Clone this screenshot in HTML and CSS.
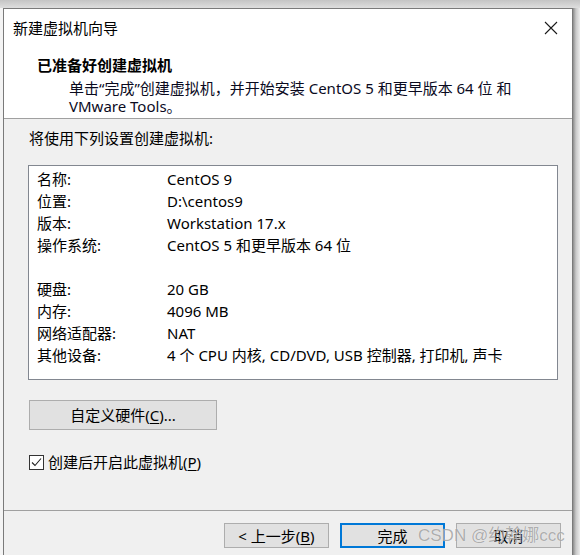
FILE: index.html
```html
<!DOCTYPE html>
<html lang="zh-CN">
<head>
    <meta charset="UTF-8">
    <meta name="viewport" content="width=device-width, initial-scale=1.0">
    <title>新建虚拟机向导</title>
    <link rel="stylesheet" href="styles.css">
</head>
<body>
    <div class="desktop">
        <div class="wizard">
            <div class="titlebar">
                <span class="title">新建虚拟机向导</span>
                <button class="close" aria-label="关闭">
                    <svg width="14" height="14" viewBox="0 0 14 14">
                        <path d="M1 1 L13 13 M13 1 L1 13" stroke="#1a1a1a" stroke-width="1.1" fill="none"/>
                    </svg>
                </button>
            </div>

            <div class="header">
                <h1>已准备好创建虚拟机</h1>
                <p class="desc">单击“完成”创建虚拟机，并开始安装 CentOS 5 和更早版本 64 位 和<br>VMware Tools。</p>
            </div>

            <div class="content">
                <p class="intro">将使用下列设置创建虚拟机:</p>
                <div class="summary">
                    <div class="row"><span class="key">名称:</span><span>CentOS 9</span></div>
                    <div class="row"><span class="key">位置:</span><span>D:\centos9</span></div>
                    <div class="row"><span class="key">版本:</span><span>Workstation 17.x</span></div>
                    <div class="row"><span class="key">操作系统:</span><span>CentOS 5 和更早版本 64 位</span></div>
                    <div class="row"></div>
                    <div class="row"><span class="key">硬盘:</span><span>20 GB</span></div>
                    <div class="row"><span class="key">内存:</span><span>4096 MB</span></div>
                    <div class="row"><span class="key">网络适配器:</span><span>NAT</span></div>
                    <div class="row"><span class="key">其他设备:</span><span>4 个 CPU 内核, CD/DVD, USB 控制器, 打印机, 声卡</span></div>
                </div>
                <button class="btn btn-hw">自定义硬件(<u>C</u>)...</button>
                <label class="check">
                    <span class="box">
                        <svg width="11" height="11" viewBox="0 0 11 11">
                            <path d="M1 5.5 L4 8.5 L10 1.5" stroke="#222" stroke-width="1.1" fill="none"/>
                        </svg>
                    </span>
                    <span>创建后开启此虚拟机(<u>P</u>)</span>
                </label>
            </div>

            <div class="footer">
                <button class="btn">&lt; 上一步(<u>B</u>)</button>
                <button class="btn btn-default">完成</button>
                <button class="btn">取消</button>
            </div>
        </div>
        <div class="watermark">CSDN @约翰娜ccc</div>
    </div>
</body>
</html>
```

FILE: styles.css
```css
* {
    margin: 0;
    padding: 0;
    box-sizing: border-box;
}

body {
    width: 580px;
    height: 555px;
    overflow: hidden;
    background: linear-gradient(to right, #f4f4f4 0, #f4f4f4 572px, #8c8c8c 573px, #c9c9c9 576px, #ececec 580px);
    font-family: "Noto Sans", "Noto Sans CJK SC", sans-serif;
    font-size: 15px;
    color: #000;
}

.desktop {
    position: relative;
    height: 555px;
    overflow: hidden;
    padding: 8px 0 0 3px;
    background: linear-gradient(to bottom, #c4c4c4 0, #dedede 8px, transparent 8px);
}

.wizard {
    width: 570px;
    height: 547px;
    border: 1px solid #7a7a7a;
    border-bottom: none;
    background: #f0f0f0;
}

.titlebar {
    height: 38px;
    background: #fff;
    display: flex;
    align-items: center;
    justify-content: space-between;
    padding: 0 14px 0 9px;
    line-height: 20px;
}

.close {
    border: none;
    background: none;
    width: 14px;
    height: 14px;
    display: flex;
}

.header {
    background: #fff;
    padding: 8px 0 3px 33px;
    border-bottom: 1px solid #a0a0a0;
}

.header h1 {
    font-size: 15px;
    font-weight: bold;
    line-height: 20px;
    font-family: "Noto Sans CJK SC", sans-serif;
}

.desc {
    margin: 4px 0 0 32px;
    line-height: 18px;
    white-space: nowrap;
    color: #0a0a1e;
}

.content {
    height: 391px;
    padding: 9px 24px 0 24px;
}

.intro {
    line-height: 20px;
    padding-left: 1px;
}

.summary {
    margin-top: 17px;
    width: 530px;
    height: 215px;
    background: #fff;
    border: 1px solid #828790;
    padding: 2px 0 0 8px;
}

.row {
    display: flex;
    height: 22px;
    line-height: 22px;
    white-space: nowrap;
}

.key {
    width: 130px;
}

.btn {
    font-family: "Noto Sans", "Noto Sans CJK SC", sans-serif;
    font-size: 15px;
    color: #000;
    background: #e1e1e1;
    border: 1px solid #adadad;
    height: 25px;
    width: 105px;
    line-height: 22px;
}

.btn u {
    text-decoration-thickness: 1px;
    text-underline-offset: 2px;
}

.btn-hw {
    display: block;
    margin: 20px 0 0 1px;
    width: 188px;
    height: 30px;
}

.check {
    display: flex;
    align-items: center;
    gap: 4px;
    margin: 22px 0 0 1px;
    line-height: 20px;
}

.check u {
    text-underline-offset: 2px;
}

.box {
    width: 15px;
    height: 15px;
    border: 1px solid #333;
    background: #fff;
    display: flex;
    align-items: center;
    justify-content: center;
}

.footer {
    border-top: 1px solid #a0a0a0;
    padding: 12px 11px 0 0;
    display: flex;
    justify-content: flex-end;
    gap: 11px;
}

.btn-default {
    border: 2px solid #0078d7;
}

.watermark {
    position: absolute;
    left: 418px;
    top: 525px;
    font-family: "Liberation Sans", "Noto Sans CJK SC", sans-serif;
    font-size: 17px;
    line-height: 22px;
    color: rgba(110, 110, 110, 0.55);
    text-shadow: 0 0 1px rgba(255, 255, 255, 0.9);
    white-space: nowrap;
}
```
